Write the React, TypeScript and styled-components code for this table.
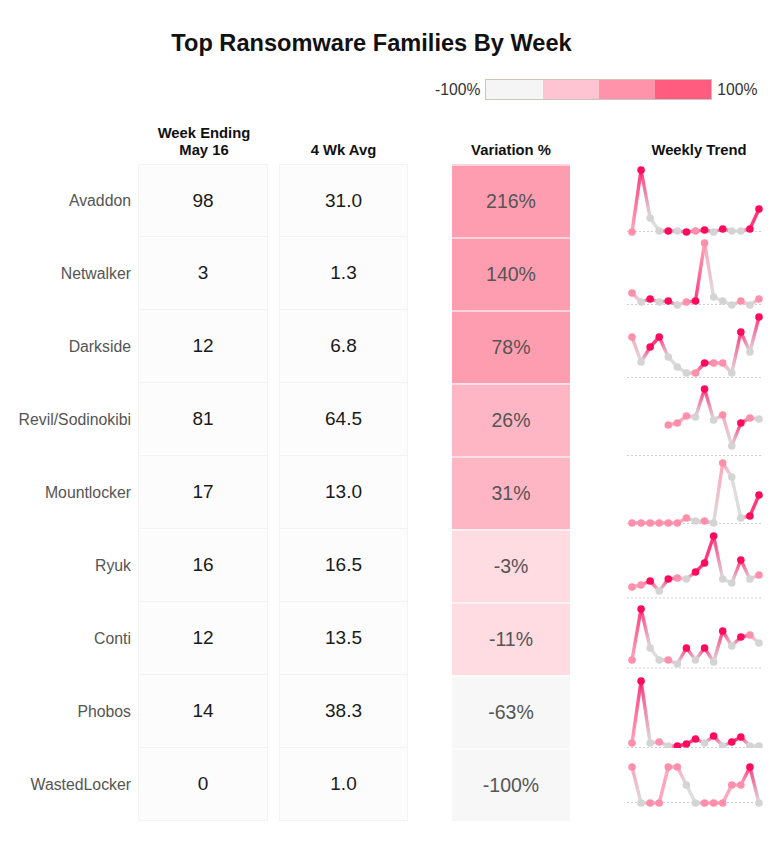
import React from "react";
import styled, { createGlobalStyle } from "styled-components";

type Row = {
  name: string;
  week: string;
  avg: string;
  variation: string;
  level: number;
  base: number;
  ys: (number | null)[];
  cs: string;
};

const rows: Row[] = [
  {
    name: "Avaddon",
    week: "98",
    avg: "31.0",
    variation: "216%",
    level: 3,
    base: 67.5,
    ys: [68, 6, 54, 67, 67, 67, 68, 67, 66, 68, 65, 67, 67, 65, 45],
    cs: "phgghghphghgghh",
  },
  {
    name: "Netwalker",
    week: "3",
    avg: "1.3",
    variation: "140%",
    level: 3,
    base: 67.5,
    ys: [56, 65, 62, 65, 64, 68, 65, 64, 6, 60, 64, 68, 64, 68, 62],
    cs: "pghghgphpgggpgp",
  },
  {
    name: "Darkside",
    week: "12",
    avg: "6.8",
    variation: "78%",
    level: 3,
    base: 67.5,
    ys: [27, 52, 37, 27, 47, 57, 63, 63, 53, 53, 53, 63, 22, 42, 7],
    cs: "pghhgggphppghgh",
  },
  {
    name: "Revil/Sodinokibi",
    week: "81",
    avg: "64.5",
    variation: "26%",
    level: 2,
    base: 72.5,
    ys: [null, null, null, null, 42, 40, 33, 34, 6, 37, 32, 63, 40, 35, 36],
    cs: "pppppppghgpghpg",
  },
  {
    name: "Mountlocker",
    week: "17",
    avg: "13.0",
    variation: "31%",
    level: 2,
    base: 67.5,
    ys: [67, 67, 67, 67, 67, 67, 62, 65, 65, 67, 7, 21, 62, 60, 39],
    cs: "pppppppgpgpgghh",
  },
  {
    name: "Ryuk",
    week: "16",
    avg: "16.5",
    variation: "-3%",
    level: 1,
    base: 69,
    ys: [58, 56, 52, 62, 50, 49, 50, 43, 34, 7, 50, 54, 31, 50, 46],
    cs: "pphghpghhhgghgp",
  },
  {
    name: "Conti",
    week: "12",
    avg: "13.5",
    variation: "-11%",
    level: 1,
    base: 66,
    ys: [58, 7, 46, 58, 58, 62, 46, 58, 46, 60, 29, 44, 35, 33, 41],
    cs: "phggpghghghghpg",
  },
  {
    name: "Phobos",
    week: "14",
    avg: "38.3",
    variation: "-63%",
    level: 0,
    base: 72.5,
    ys: [68, 6, 68, 67, 71, 71, 69, 64, 68, 61, 71, 67, 62, 71, 71],
    cs: "phgpghhhghghhgg",
  },
  {
    name: "WastedLocker",
    week: "0",
    avg: "1.0",
    variation: "-100%",
    level: 0,
    base: 54.5,
    ys: [19, 55, 55, 55, 19, 19, 37, 55, 55, 55, 55, 37, 37, 19, 55],
    cs: "pgppppggppppphg",
  },
];

const dotColors: Record<string, string> = {
  p: "#ff8fab",
  h: "#ff0a5c",
  g: "#d4d4d4",
};

const levelColors = ["#f7f7f7", "#ffdbe2", "#ffb6c4", "#ff9db0"];

const GlobalStyle = createGlobalStyle`
  body {
    margin: 0;
    background: #fff;
    font-family: "Liberation Sans", Arial, sans-serif;
  }
`;

const Page = styled.div`
  width: 782px;
  height: 848px;
  overflow: hidden;
`;

const Title = styled.h1`
  width: 743px;
  margin: 29px 0 0;
  text-align: center;
  font-size: 23.6px;
  line-height: 28px;
  font-weight: 700;
  color: #111;
`;

const Legend = styled.div`
  display: flex;
  align-items: center;
  gap: 5px;
  margin: 21px 0 0 435px;
  height: 23px;
  font-size: 15.7px;
  color: #333;
`;

const LegendBar = styled.div`
  display: flex;
  width: 227px;
  height: 21px;
  border: 1px solid #cbc5bd;
  box-sizing: border-box;
`;

const Swatch = styled.div<{ $color: string }>`
  flex: 1;
  background: ${(p) => p.$color};
`;

const Grid = styled.div`
  display: grid;
  grid-template-columns: 138px 141px 173px 168px 162px;
`;

const HeadRow = styled(Grid)`
  height: 63px;
  align-items: end;
  padding-bottom: 5px;
  box-sizing: border-box;
`;

const HeadCell = styled.div<{ $width?: number }>`
  width: ${(p) => (p.$width ? `${p.$width}px` : "auto")};
  text-align: center;
  font-size: 14.8px;
  line-height: 17px;
  font-weight: 700;
  color: #111;
`;

const BodyRow = styled(Grid)`
  height: 73px;
`;

const Label = styled.div`
  align-self: center;
  padding-right: 7px;
  text-align: right;
  font-size: 15.8px;
  color: #555;
`;

const NumCell = styled.div<{ $width: number; $first: boolean }>`
  width: ${(p) => p.$width}px;
  height: 73px;
  box-sizing: border-box;
  display: flex;
  align-items: center;
  justify-content: center;
  background: #fcfcfc;
  border: 1px solid #f3f3f3;
  border-top-width: ${(p) => (p.$first ? 1 : 0)}px;
  font-size: 19px;
  color: #1a1a1a;
`;

const VarCell = styled.div<{ $level: number }>`
  width: 118px;
  height: 73px;
  box-sizing: border-box;
  display: flex;
  align-items: center;
  justify-content: center;
  background: ${(p) => levelColors[p.$level]};
  border-top: 2px solid rgba(255, 255, 255, 0.55);
  font-size: 19.5px;
  color: #555;
`;

const TrendSvg = styled.svg`
  display: block;
`;

const Sparkline = ({ row, idx }: { row: Row; idx: number }) => {
  const xs = row.ys.map((_, i) => 12 + i * 9.07);
  const segs: React.ReactNode[] = [];
  for (let i = 0; i < row.ys.length - 1; i++) {
    const y1 = row.ys[i];
    const y2 = row.ys[i + 1];
    if (y1 === null || y2 === null) continue;
    const id = `seg-${idx}-${i}`;
    segs.push(
      <g key={id}>
        <defs>
          <linearGradient id={id} gradientUnits="userSpaceOnUse" x1={xs[i]} y1={y1} x2={xs[i + 1]} y2={y2}>
            <stop offset="0" stopColor={dotColors[row.cs[i]]} />
            <stop offset="1" stopColor={dotColors[row.cs[i + 1]]} />
          </linearGradient>
        </defs>
        <line
          x1={xs[i]}
          y1={y1}
          x2={xs[i + 1]}
          y2={y2}
          stroke={`url(#${id})`}
          strokeWidth={3.4}
          strokeOpacity={0.8}
          strokeLinecap="round"
        />
      </g>
    );
  }
  return (
    <TrendSvg width={150} height={73} viewBox="0 0 150 73">
      <line x1={7} y1={row.base} x2={143} y2={row.base} stroke="#cfcfcf" strokeWidth={1} strokeDasharray="2 2" />
      {segs}
      {row.ys.map((y, i) =>
        y === null ? null : <circle key={i} cx={xs[i]} cy={y} r={3.8} fill={dotColors[row.cs[i]]} />
      )}
    </TrendSvg>
  );
};

const App = () => {
  return (
    <Page>
      <GlobalStyle />
      <Title>Top Ransomware Families By Week</Title>
      <Legend>
        <span>-100%</span>
        <LegendBar>
          <Swatch $color="#f5f5f5" />
          <Swatch $color="#ffc4d1" />
          <Swatch $color="#ff93a9" />
          <Swatch $color="#ff5c80" />
        </LegendBar>
        <span>100%</span>
      </Legend>

      <HeadRow>
        <div />
        <HeadCell $width={132}>
          Week Ending
          <br />
          May 16
        </HeadCell>
        <HeadCell $width={129}>4 Wk Avg</HeadCell>
        <HeadCell $width={118}>Variation %</HeadCell>
        <HeadCell $width={158}>Weekly Trend</HeadCell>
      </HeadRow>

      {rows.map((row, i) => (
        <BodyRow key={row.name}>
          <Label>{row.name}</Label>
          <NumCell $width={130} $first={i === 0}>
            {row.week}
          </NumCell>
          <NumCell $width={129} $first={i === 0}>
            {row.avg}
          </NumCell>
          <VarCell $level={row.level}>{row.variation}</VarCell>
          <Sparkline row={row} idx={i} />
        </BodyRow>
      ))}
    </Page>
  );
};

export default App;
